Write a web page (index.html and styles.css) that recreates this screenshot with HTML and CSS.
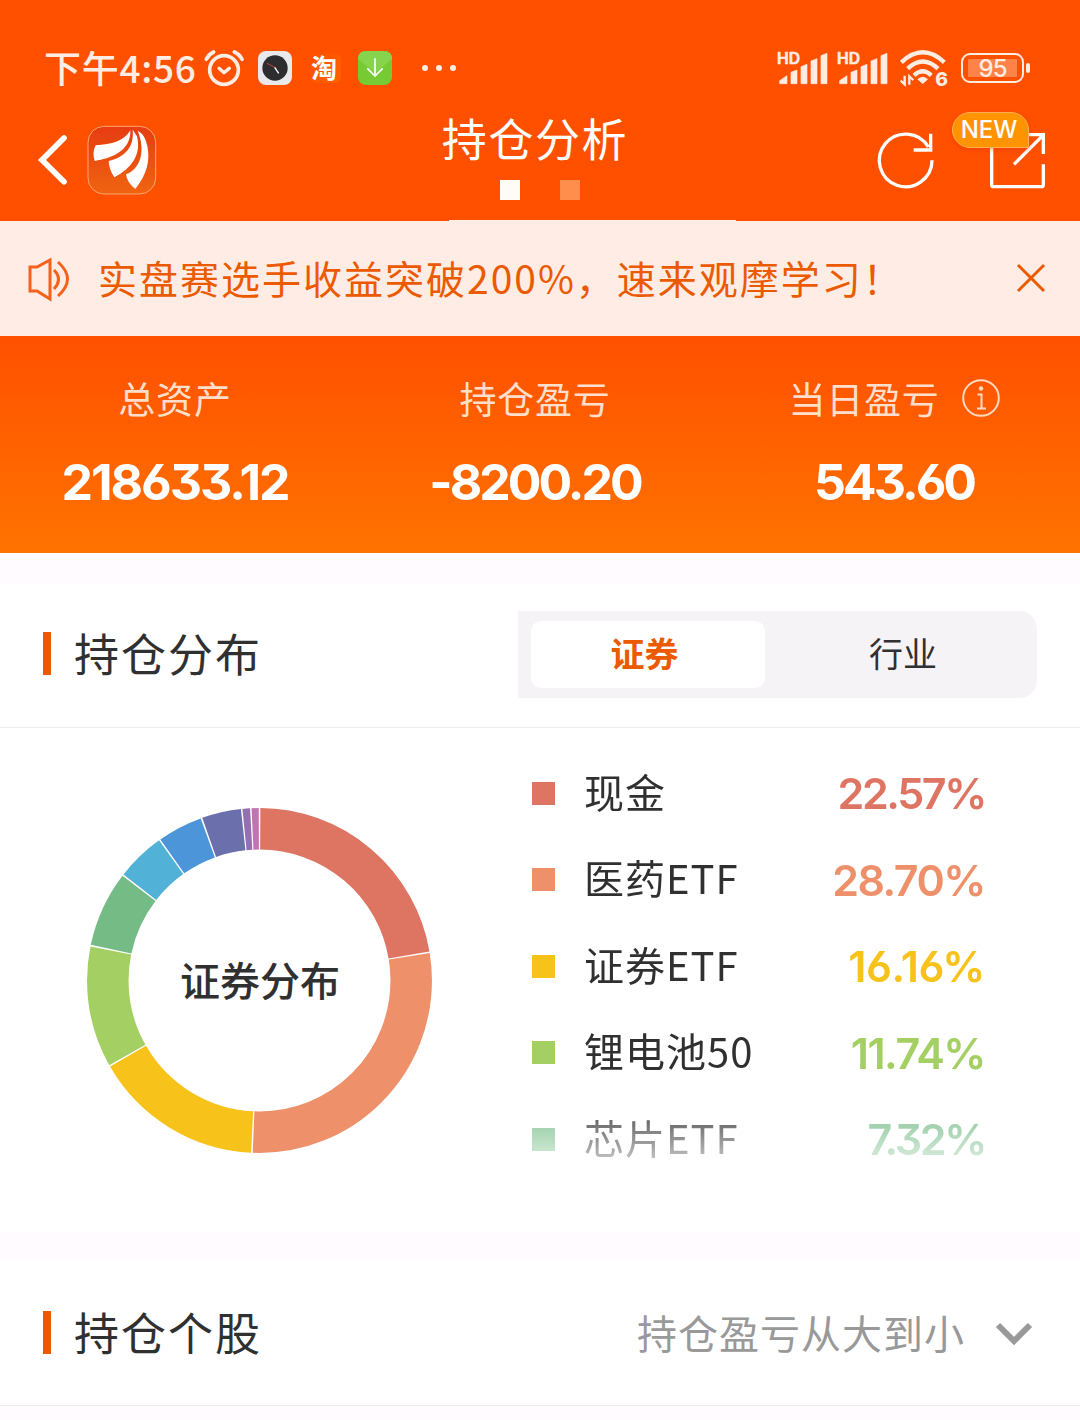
FILE: index.html
```
<!DOCTYPE html>
<html lang="zh-CN">
<head>
  <meta charset="UTF-8">
  <title>持仓分析</title>
  <link rel="stylesheet" href="styles.css">
</head>
<body>
  <header class="header">
    <div class="status-bar">
      <span class="time">下午4:56</span>
      <svg class="alarm" width="40" height="38" viewBox="520 40 120 114" fill="none" stroke="#ffece2" stroke-linecap="round">
        <circle cx="580" cy="103" r="43" stroke-width="11"/>
        <path d="M527 71Q534 56 549 49M611 49Q627 56 634 71" stroke-width="11"/>
        <path d="M565 98L580 111L596 98" stroke-width="10" stroke-linejoin="round"/>
      </svg>
      <svg class="clock" width="34" height="34" viewBox="0 0 102 102">
        <rect width="102" height="102" rx="24" fill="#e9e9eb"/>
        <circle cx="51" cy="51" r="38" fill="#2d2d2f"/>
        <path d="M27 37L52 50" stroke="#c8403a" stroke-width="3"/>
        <path d="M50 49L62 67" stroke="#fff" stroke-width="4"/>
      </svg>
      <span class="taobao">淘</span>
      <svg class="download" width="34" height="34" viewBox="0 0 102 102">
        <rect width="102" height="102" rx="24" fill="#76cb35"/>
        <path d="M0 24Q0 0 24 0H78Q102 0 102 24L51 66Z" fill="#86d34d"/>
        <path d="M51 22V74M28 52L51 75L74 52" fill="none" stroke="#fff" stroke-width="5"/>
      </svg>
      <span class="dots"><i></i><i></i><i></i></span>

      <div class="status-right">
        <svg class="signal" width="52" height="36" viewBox="50 45 156 108" fill="#ffece2" stroke="#ffece2" stroke-width="2" stroke-linejoin="round">
          <text class="hd" x="50" y="86">HD</text>
          <path d="M58 146V137L80 122V146ZM92 146V112L110 105V146ZM122 146V95L140 88V146ZM152 146V78L170 71V146ZM182 146V62L200 55V146Z"/>
        </svg>
        <svg class="signal" width="52" height="36" viewBox="50 45 156 108" fill="#ffece2" stroke="#ffece2" stroke-width="2" stroke-linejoin="round">
          <text class="hd" x="50" y="86">HD</text>
          <path d="M58 146V137L80 122V146ZM92 146V112L110 105V146ZM122 146V95L140 88V146ZM152 146V78L170 71V146ZM182 146V62L200 55V146Z"/>
        </svg>
        <svg class="wifi" width="50" height="40" viewBox="417 43 150 120" fill="none" stroke="#ffece2" stroke-width="13">
          <path d="M424 86Q488 26 553 86M443 105Q488 62 534 105M462 125Q488 101 514 125"/>
          <path d="M472 137Q488 122 504 137L488 151Z" fill="#ffece2" stroke="none"/>
          <path d="M434 126V152L422 141M448 153V128L460 139" stroke-width="7"/>
          <text class="six" x="526" y="157">6</text>
        </svg>
        <div class="battery"><span>95</span></div>
      </div>
    </div>

    <div class="nav">
      <svg class="back" width="32" height="54" viewBox="24 296 96 162" fill="none" stroke="#fff" stroke-width="17" stroke-linecap="round">
        <path d="M102 311L36 377L102 442"/>
      </svg>
      <svg class="logo" width="70" height="70" viewBox="172 270 210 210">
        <defs>
          <linearGradient id="logoBg" x1="0" y1="0" x2="0" y2="1">
            <stop offset="0" stop-color="#e63c12"/>
            <stop offset="1" stop-color="#f06410"/>
          </linearGradient>
        </defs>
        <rect x="175" y="274" width="203" height="203" rx="48" fill="url(#logoBg)" stroke="#ffa673" stroke-width="3"/>
        <g fill="#fff">
          <path d="M302 286C284 318 246 329 198 331Q187 352 195 378C246 370 304 348 302 286Z"/>
          <path d="M309 284C314 338 286 365 237 378Q238 404 254 427C305 400 336 360 322 304Z"/>
          <path d="M324 287C350 352 330 402 289 418Q292 443 317 462C352 420 362 374 353 334C348 308 340 296 324 287Z"/>
        </g>
      </svg>
      <div class="nav-title">
        <h1>持仓分析</h1>
        <div class="pager"><i class="on"></i><i></i></div>
      </div>
      <svg class="refresh" width="60" height="60" viewBox="349 285 180 180" fill="none" stroke="#fff" stroke-width="10">
        <path d="M517 376A79 79 0 1 1 506 336"/>
        <path d="M513 296V345H462"/>
      </svg>
      <div class="share">
        <svg width="58" height="60" viewBox="687 285 174 180" fill="none" stroke="#fff" stroke-width="10">
          <path d="M695 299H850V357M695 299V449Q695 455 701 455H844Q850 455 850 449V388M762 388L848 302"/>
        </svg>
        <span class="badge">NEW</span>
      </div>
    </div>
    <div class="progress"></div>
  </header>

  <div class="notice">
    <svg width="44" height="46" viewBox="27 255 44 46" fill="none" stroke="#f4621c" stroke-width="3">
      <path d="M30 267H37L50 260V299L37 291H30Z"/>
      <path d="M54 270Q63 279 54 289M58 262Q77 279 58 296"/>
    </svg>
    <p>实盘赛选手收益突破200%，速来观摩学习！</p>
    <svg class="close" width="28" height="28" viewBox="0 0 28 28" stroke="#ec5a00" stroke-width="3">
      <path d="M1 1L27 27M27 1L1 27"/>
    </svg>
  </div>

  <section class="summary">
    <div class="stat">
      <div class="stat-label">总资产</div>
      <div class="stat-value">218633.12</div>
    </div>
    <div class="stat">
      <div class="stat-label">持仓盈亏</div>
      <div class="stat-value tight">-8200.20</div>
    </div>
    <div class="stat">
      <div class="stat-label">当日盈亏
        <svg width="38" height="38" viewBox="0 0 38 38" fill="none" stroke="#ffd9c2" stroke-width="2">
          <circle cx="19" cy="19" r="17.8"/>
          <circle cx="19" cy="9.5" r="2.2" fill="#ffd9c2" stroke="none"/>
          <path d="M15.5 15.5H19.5V29M15 29.5H24"/>
        </svg>
      </div>
      <div class="stat-value tight">543.60</div>
    </div>
  </section>

  <section class="card">
    <div class="card-head">
      <h2>持仓分布</h2>
      <div class="tabs">
        <button class="tab active">证券</button>
        <button class="tab">行业</button>
      </div>
    </div>
    <div class="distribution">
      <div class="donut">
        <!-- each ring piece is a dash on a 1000-unit circle -->
        <svg width="346" height="346" viewBox="-172.5 -172.5 346 346">
          <g class="ring">
            <circle r="151.7" pathLength="1000" stroke="#de7462" stroke-dasharray="222.2 777.8" stroke-dashoffset="-0.8"/>
            <circle r="151.7" pathLength="1000" stroke="#ee916b" stroke-dasharray="281.9 718.1" stroke-dashoffset="-224.4"/>
            <circle r="151.7" pathLength="1000" stroke="#f7c21a" stroke-dasharray="159 841" stroke-dashoffset="-507.8"/>
            <circle r="151.7" pathLength="1000" stroke="#a4cf63" stroke-dasharray="113.4 886.6" stroke-dashoffset="-668.3"/>
            <circle r="151.7" pathLength="1000" stroke="#74bb86" stroke-dasharray="70.7 929.3" stroke-dashoffset="-783.2"/>
            <circle r="151.7" pathLength="1000" stroke="#52b1d7" stroke-dasharray="45.6 954.4" stroke-dashoffset="-855.4"/>
            <circle r="151.7" pathLength="1000" stroke="#4b95d8" stroke-dasharray="42.1 957.9" stroke-dashoffset="-902.5"/>
            <circle r="151.7" pathLength="1000" stroke="#6b70ad" stroke-dasharray="36.7 963.3" stroke-dashoffset="-946.1"/>
            <circle r="151.7" pathLength="1000" stroke="#956fb0" stroke-dasharray="7 993" stroke-dashoffset="-984.2"/>
            <circle r="151.7" pathLength="1000" stroke="#c174af" stroke-dasharray="6.7 993.3" stroke-dashoffset="-992.6"/>
          </g>
        </svg>
        <span class="donut-label">证券分布</span>
      </div>
      <ul class="legend">
        <li class="red"><i></i><span>现金</span><b>22.57%</b></li>
        <li class="orange"><i></i><span>医药ETF</span><b>28.70%</b></li>
        <li class="yellow"><i></i><span>证券ETF</span><b>16.16%</b></li>
        <li class="lime"><i></i><span>锂电池50</span><b>11.74%</b></li>
        <li class="green"><i></i><span>芯片ETF</span><b>7.32%</b></li>
      </ul>
    </div>
  </section>

  <section class="card stocks">
    <div class="card-head">
      <h2>持仓个股</h2>
      <div class="sort"><span>持仓盈亏从大到小</span>
        <svg width="36" height="24" viewBox="0 0 36 24" fill="none" stroke="#999" stroke-width="6">
          <path d="M2 3L18 19L34 3"/>
        </svg>
      </div>
    </div>
  </section>
</body>
</html>
```
FILE: styles.css
```
* {
  box-sizing: border-box;
}

body {
  margin: 0;
  width: 1080px;
  height: 1420px;
  overflow: hidden;
  background: #fffbff;
  color: #303030;
  font-family: "Noto Sans CJK SC", sans-serif;
}

h1, h2, p, ul {
  margin: 0;
  padding: 0;
  font-weight: 400;
}

svg {
  display: block;
  flex-shrink: 0;
  overflow: visible;
}

/* header */
.header {
  height: 221px;
  background: #ff5000;
  color: #fff;
}

.status-bar {
  display: flex;
  align-items: center;
  height: 100px;
  padding: 36px 50px 0 44px;
  color: #ffece2;
}

.time {
  width: 160px;
  padding-bottom: 3px;
  font-size: 37px;
  font-weight: 500;
  line-height: 60px;
  letter-spacing: 0.7px;
  white-space: nowrap;
}

.clock {
  margin-left: 14px;
}

.taobao {
  margin-left: 19px;
  width: 30px;
  height: 30px;
  border-radius: 7px;
  background: linear-gradient(135deg, #ff5000, #ff6200);
  color: #fff;
  font-size: 26px;
  font-weight: 700;
  line-height: 28px;
}

.download {
  margin-left: 17px;
}

.dots {
  display: flex;
  gap: 8px;
  margin-left: 30px;
}

.dots i {
  width: 6px;
  height: 6px;
  border-radius: 50%;
  background: #ffece2;
}

.status-right {
  display: flex;
  align-items: center;
  margin-left: auto;
}

.signal {
  margin-right: 8px;
}

.hd {
  font: 600 47px "Inter", sans-serif;
}

.six {
  font: 800 58px "Inter", sans-serif;
  fill: #ffece2;
  stroke: none;
}

.wifi {
  margin-left: 2px;
}

.battery {
  position: relative;
  width: 63px;
  height: 30px;
  margin: 0 6px 0 12px;
  padding: 4px 5px;
  border: 2.5px solid #ffece2;
  border-radius: 9px;
}

.battery span {
  display: block;
  height: 18px;
  background: #ff8248;
  font: 500 24px/19px "Inter", sans-serif;
  letter-spacing: -1px;
  text-align: center;
}

.battery::after {
  content: "";
  position: absolute;
  right: -8px;
  top: 8px;
  width: 4px;
  height: 10px;
  border-radius: 2px;
  background: #ffece2;
}

.nav {
  display: flex;
  align-items: center;
  height: 120px;
  padding: 0 33px 1px 38px;
}

.logo {
  margin-left: 17px;
}

.nav-title {
  width: 200px;
  height: 104px;
  margin-left: 278px;
}

.nav-title h1 {
  font-size: 45px;
  line-height: 60px;
  letter-spacing: 1.6px;
  text-align: center;
  white-space: nowrap;
}

.pager {
  display: flex;
  gap: 40px;
  margin: 12px 0 0 65px;
}

.pager i {
  width: 20px;
  height: 20px;
  background: #ff8d4c;
}

.pager .on {
  background: #fffcf8;
}

.refresh {
  margin-left: auto;
}

.share {
  position: relative;
  margin-left: 53px;
}

.badge {
  position: absolute;
  left: -37px;
  top: -18px;
  width: 77px;
  height: 36px;
  padding-right: 3px;
  border: 1.5px solid #ffb152;
  border-radius: 18px 18px 1px 18px;
  background: #ff9400;
  box-shadow: 0 2px 5px rgba(220, 50, 0, 0.35);
  font: 500 24px/34px "Inter", sans-serif;
  text-align: center;
}

.progress {
  width: 287px;
  height: 1px;
  margin-left: 449px;
  background: #fff0e8;
}

/* notice */
.notice {
  display: flex;
  align-items: center;
  height: 115px;
  padding: 0 35px 1px 27px;
  background: #ffede5;
  color: #ec5a00;
}

.notice p {
  margin-left: 27px;
  padding-bottom: 3px;
  font-size: 39px;
  letter-spacing: 2px;
  line-height: 60px;
  white-space: nowrap;
}

.close {
  margin-left: auto;
}

/* summary */
.summary {
  display: grid;
  grid-template-columns: 350px 370px 348px;
  height: 217px;
  padding-top: 31px;
  background: linear-gradient(#ff5000, #ff7300);
  color: #fff;
  text-align: center;
}

.stat-label {
  display: flex;
  justify-content: center;
  align-items: center;
  gap: 22px;
  height: 62px;
  color: #ffdfcc;
  font-size: 37px;
  letter-spacing: 0.8px;
}

.stat-value {
  margin-top: 20px;
  font: 700 50px/66px "Inter", sans-serif;
  font-feature-settings: "cv03", "cv04", "cv09";
  letter-spacing: -2px;
}

.stat-value.tight {
  letter-spacing: -3px;
}

/* cards */
.card {
  margin-top: 30px;
  background: #fff;
}

.stocks {
  margin-top: 29px;
}

.card-head {
  display: flex;
  justify-content: space-between;
  align-items: center;
  height: 145px;
  padding: 0 43px 2px;
  border-bottom: 1px solid #ededed;
}

.card-head h2 {
  display: flex;
  align-items: center;
  gap: 23px;
  padding-bottom: 2px;
  font-size: 45px;
  line-height: 60px;
  letter-spacing: 2px;
}

.stocks h2 {
  padding-bottom: 0;
}

.card-head h2::before {
  content: "";
  width: 8px;
  height: 43px;
  background: #ec5a00;
}

.tabs {
  display: flex;
  width: 519px;
  height: 87px;
  padding: 10px 13px;
  border-radius: 0 18px 18px 0;
  background: #f6f3f7;
}

.tab {
  width: 234px;
  height: 67px;
  padding: 0 0 4px;
  border: 0;
  border-radius: 10px;
  background: none;
  color: #303030;
  font: 400 34px "Noto Sans CJK SC", sans-serif;
}

.tab + .tab {
  margin-left: 21px;
}

.tab.active {
  padding-right: 7px;
  background: #fff;
  color: #ec5a00;
  font-weight: 700;
}

.distribution {
  display: flex;
  align-items: flex-start;
  height: 504px;
}

.donut {
  display: grid;
  place-items: center;
  width: 346px;
  height: 346px;
  margin: 80px 0 0 87px;
}

.donut svg,
.donut-label {
  grid-area: 1 / 1;
}

.ring {
  transform: rotate(-90deg);
  fill: none;
  stroke-width: 41.5px;
}

.donut-label {
  padding-bottom: 4px;
  font-size: 40px;
  font-weight: 500;
}

.legend {
  width: 453px;
  height: 440px;
  margin: 22px 0 0 99px;
  list-style: none;
  mask-image: linear-gradient(#000 345px, transparent 437px);
}

.legend li {
  display: flex;
  align-items: center;
  height: 86.5px;
}

.legend i {
  width: 23px;
  height: 23px;
  margin-right: 29px;
  background: currentColor;
}

.legend span {
  padding-bottom: 5px;
  color: #303030;
  font-size: 40px;
  letter-spacing: 1px;
}

.legend b {
  margin-left: auto;
  font: 600 43px "Inter", sans-serif;
  font-feature-settings: "cv03", "cv04", "cv09";
  letter-spacing: -1.5px;
}

.red { color: #de7462; }
.orange { color: #ee916b; }
.yellow { color: #f7c21a; }
.lime { color: #a4cf63; }
.green { color: #74bb86; }

.legend .red b,
.legend .green b {
  letter-spacing: -2.4px;
}

.legend .yellow b {
  letter-spacing: -0.5px;
}

.sort {
  display: flex;
  align-items: center;
  gap: 31px;
  margin-right: 5px;
  color: #999;
  font-size: 40px;
  letter-spacing: 1px;
}

.sort svg {
  margin-top: 3px;
}
```
